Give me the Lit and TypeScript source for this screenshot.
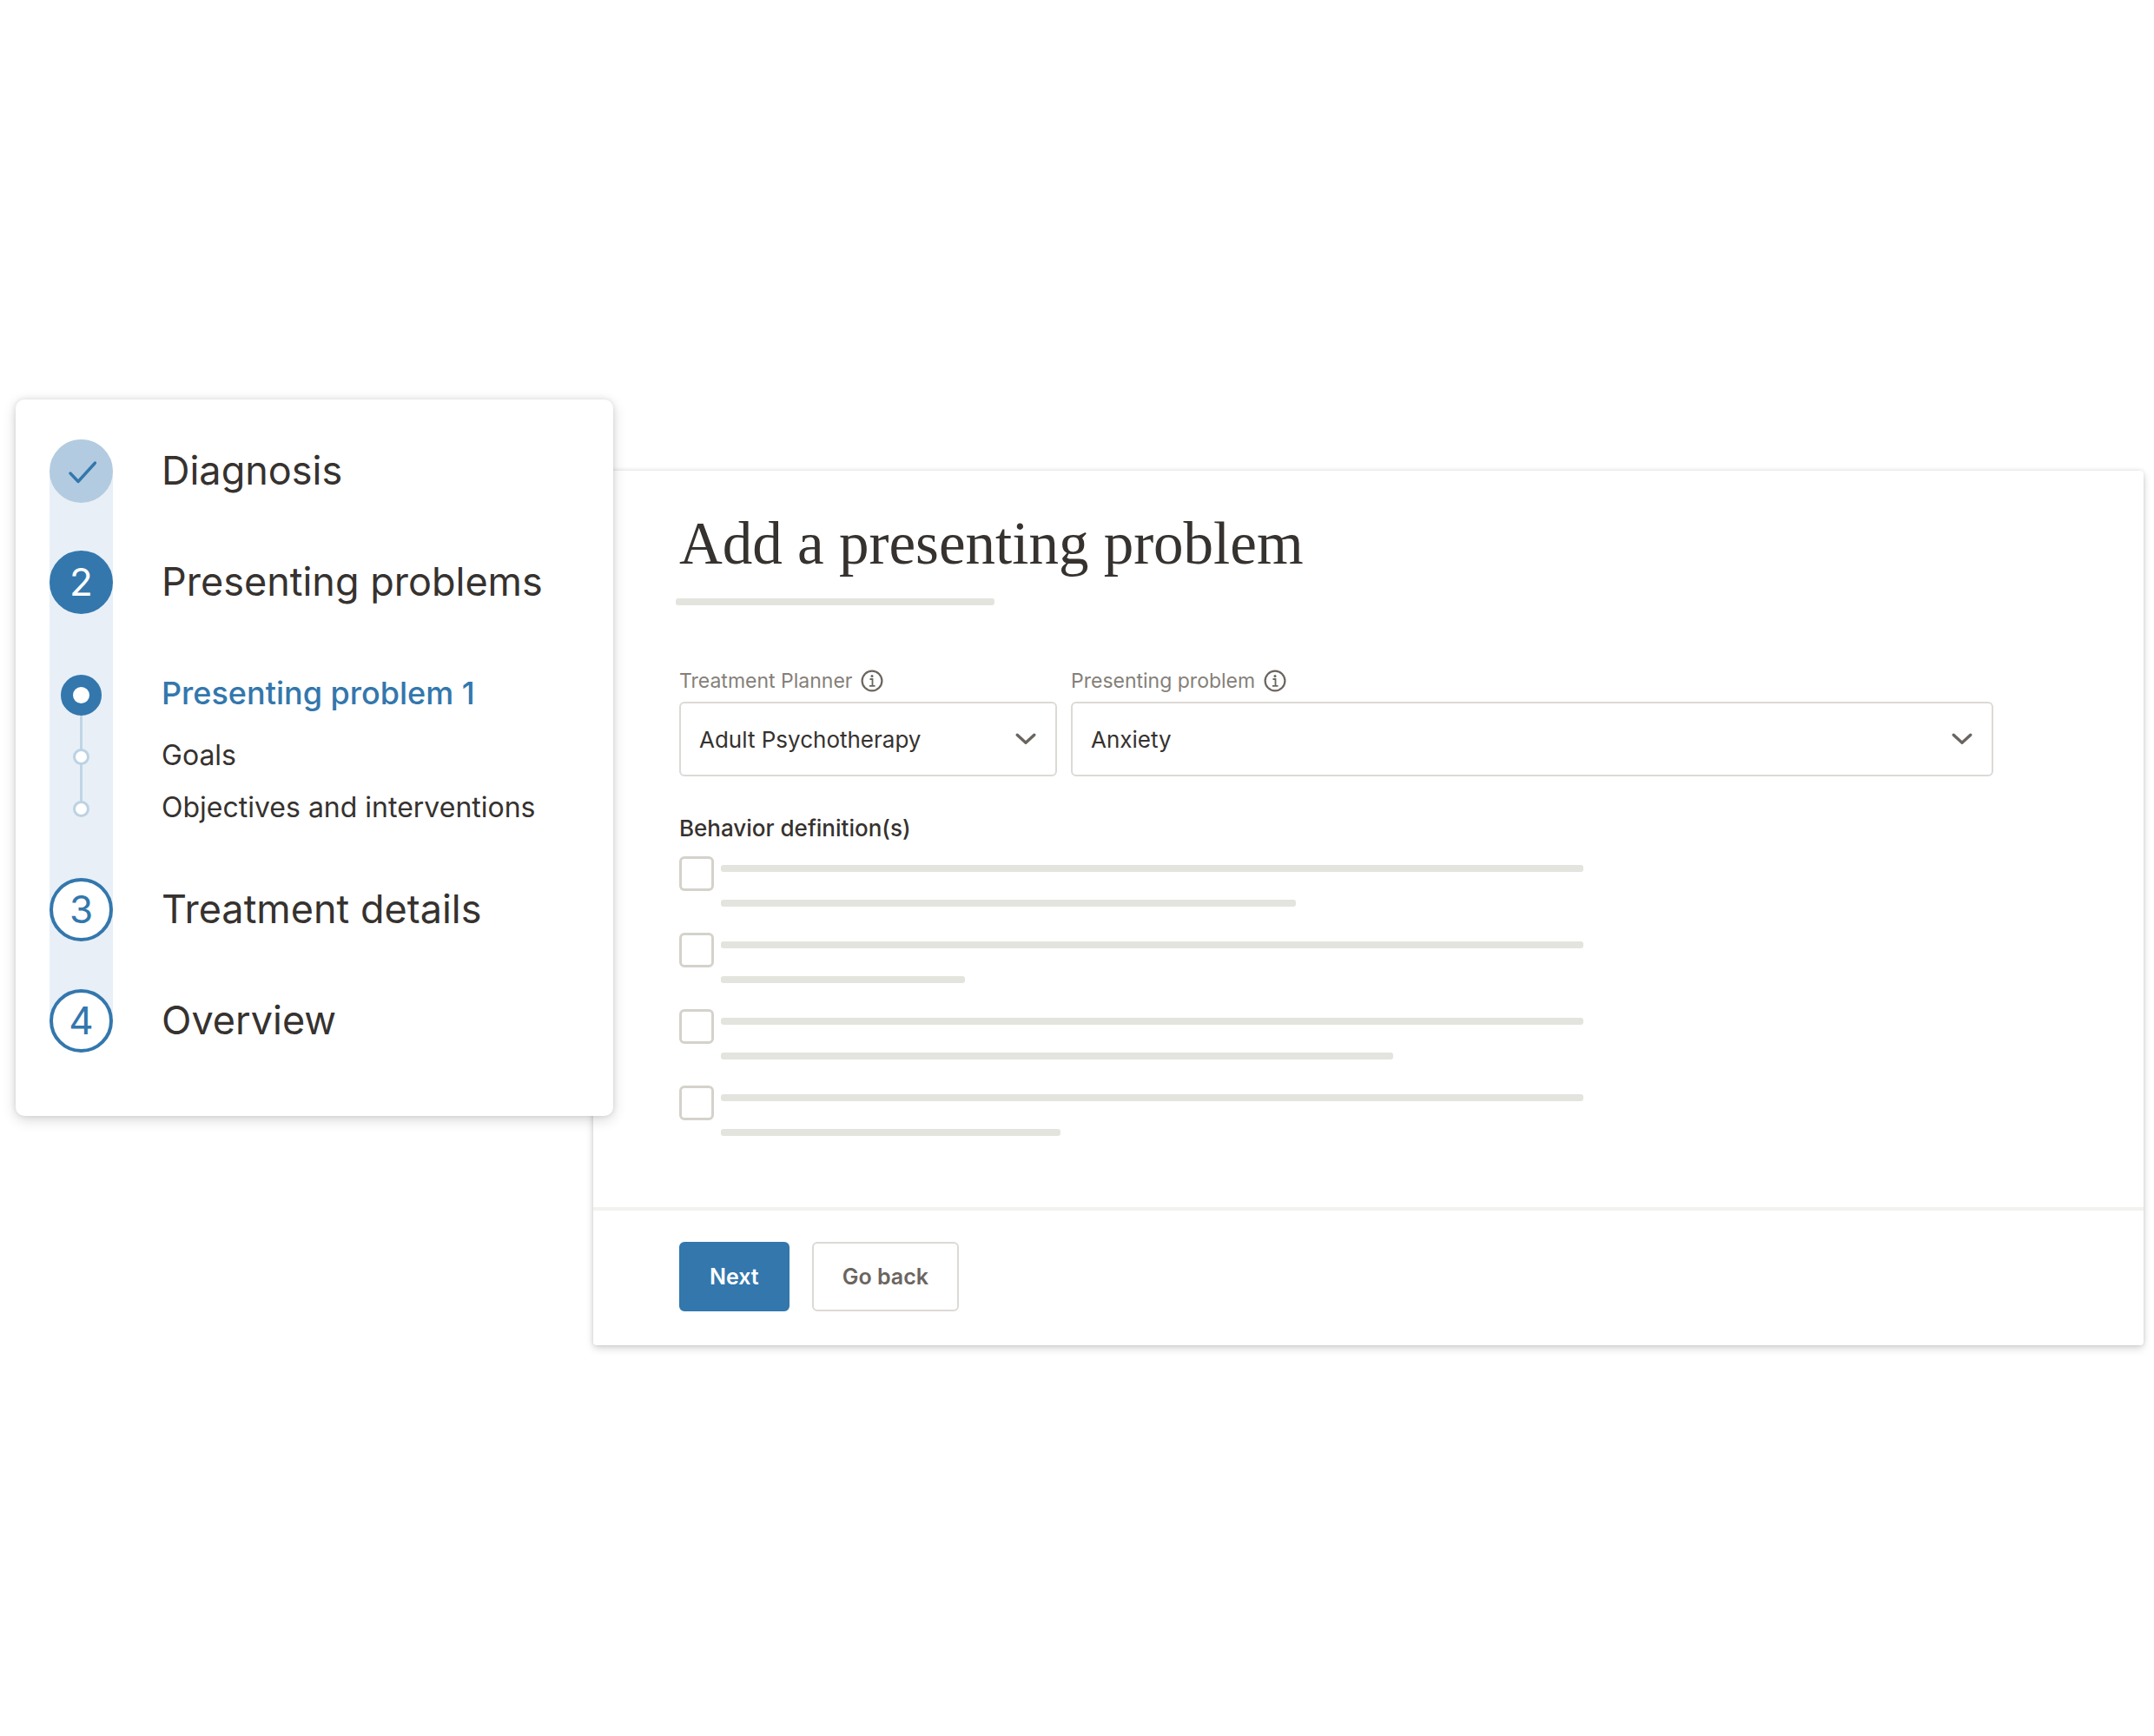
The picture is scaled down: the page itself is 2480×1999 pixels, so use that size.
import { LitElement, html, css, svg, nothing } from "lit";
import { customElement, property } from "lit/decorators.js";
import { classMap } from "lit/directives/class-map.js";

type StepState = "done" | "current" | "upcoming";

interface Step {
  label: string;
  state: StepState;
  children?: { label: string; active?: boolean }[];
}

const STEPS: Step[] = [
  { label: "Diagnosis", state: "done" },
  {
    label: "Presenting problems",
    state: "current",
    children: [
      { label: "Presenting problem 1", active: true },
      { label: "Goals" },
      { label: "Objectives and interventions" },
    ],
  },
  { label: "Treatment details", state: "upcoming" },
  { label: "Overview", state: "upcoming" },
];

/* Widths of the two placeholder lines of each definition, in px. */
const DEFINITIONS: [number, number][] = [
  [993, 662],
  [993, 281],
  [993, 774],
  [993, 391],
];

const checkIcon = svg`<svg width="34" height="28" viewBox="0 0 34 28" fill="none" aria-hidden="true">
  <path d="M4 16 L13 25.5 L32.5 4" stroke="currentColor" stroke-width="3.4" stroke-linecap="round" stroke-linejoin="round" />
</svg>`;

const infoIcon = svg`<svg width="26" height="26" viewBox="0 0 26 26" fill="none" aria-hidden="true">
  <circle cx="13" cy="13" r="11.4" stroke="currentColor" stroke-width="2.2" />
  <path d="M10.5 11 H13.5 V18.5 M10 18.8 H16.5" stroke="currentColor" stroke-width="1.8" />
  <circle cx="13" cy="7.5" r="1.5" fill="currentColor" />
</svg>`;

const chevronIcon = svg`<svg class="chevron" width="26" height="16" viewBox="0 0 26 16" fill="none" aria-hidden="true">
  <path d="M3.2 3.2 L13 12.2 L22.8 3.2" stroke="currentColor" stroke-width="3.4" stroke-linecap="round" stroke-linejoin="round" />
</svg>`;

@customElement("step-nav")
export class StepNav extends LitElement {
  static styles = css`
    :host {
      display: block;
      box-sizing: border-box;
      padding: 46px 39px 73px;
      border-radius: 10px;
      background: #fff;
      box-shadow: 0 4px 16px rgba(0, 0, 0, 0.16), 0 0 6px rgba(0, 0, 0, 0.1);
    }
    ol {
      list-style: none;
      margin: 0;
      padding: 0;
    }
    .steps {
      background: linear-gradient(#e8eff6, #e8eff6) no-repeat 0 37px / 73px calc(100% - 74px);
    }
    a {
      display: grid;
      grid-template-columns: 73px 1fr;
      column-gap: 56px;
      align-items: center;
      justify-items: start;
      color: #36322f;
      text-decoration: none;
      white-space: nowrap;
    }
    .step {
      height: 73px;
      font-size: 45px;
      line-height: 70px;
      margin-bottom: 55px;
    }
    li:last-child > .step {
      margin-bottom: 0;
    }
    .step .label {
      padding-bottom: 2px;
    }
    .marker {
      box-sizing: border-box;
      width: 73px;
      height: 73px;
      padding-bottom: 2px;
      border-radius: 50%;
      display: flex;
      align-items: center;
      justify-content: center;
      border: 4px solid #3377ad;
      background: #fff;
      color: #3377ad;
      font-size: 44px;
    }
    .done {
      padding-bottom: 0;
      border-color: #b3cbe0;
      background: #b3cbe0;
    }
    .current {
      background: #3377ad;
      color: #fff;
    }
    .substeps {
      margin-bottom: 50px;
      background: linear-gradient(#c0d5e6, #c0d5e6) no-repeat 35px 38px / 3px calc(100% - 68px);
    }
    .substep {
      height: 60px;
      font-size: 32px;
      line-height: 40px;
    }
    .substep .label {
      padding-bottom: 2px;
    }
    .active {
      height: 76px;
      margin-bottom: 3px;
      font-size: 36px;
      font-weight: 500;
      color: #3377ad;
    }
    .active .label {
      padding-bottom: 4px;
    }
    .dot {
      box-sizing: border-box;
      width: 19px;
      height: 19px;
      border-radius: 50%;
      border: 3px solid #bcd2e4;
      background: #fff;
      justify-self: center;
    }
    .active .dot {
      width: 47px;
      height: 47px;
      border: 14px solid #3377ad;
    }
  `;

  private renderStep(step: Step, index: number) {
    return html`<li>
      <a class="step" href="#step-${index + 1}">
        <span class="marker ${step.state}">${step.state === "done" ? checkIcon : index + 1}</span>
        <span class="label">${step.label}</span>
      </a>
      ${step.children
        ? html`<ol class="substeps">
            ${step.children.map(
              (child) => html`<li>
                <a class=${classMap({ substep: true, active: !!child.active })} href="#substep">
                  <span class="dot"></span><span class="label">${child.label}</span>
                </a>
              </li>`
            )}
          </ol>`
        : nothing}
    </li>`;
  }

  render() {
    return html`<nav><ol class="steps">${STEPS.map((s, i) => this.renderStep(s, i))}</ol></nav>`;
  }
}

@customElement("select-field")
export class SelectField extends LitElement {
  @property() label = "";
  @property() value = "";

  static styles = css`
    :host {
      display: block;
      min-width: 0;
    }
    .label {
      display: flex;
      align-items: center;
      gap: 10px;
      height: 26px;
      margin-bottom: 11px;
      font-size: 23px;
      color: #857f79;
      white-space: nowrap;
    }
    svg {
      color: #6b655f;
    }
    .control {
      display: grid;
      align-items: center;
    }
    select,
    .chevron {
      grid-area: 1 / 1;
    }
    select {
      appearance: none;
      width: 100%;
      height: 86px;
      margin: 0;
      padding: 0 80px 0 21px;
      border: 2px solid #dcdad5;
      border-radius: 6px;
      background: #fff;
      color: #36322f;
      font: inherit;
      font-size: 26px;
    }
    .chevron {
      justify-self: end;
      margin-right: 23px;
      pointer-events: none;
    }
  `;

  render() {
    return html`
      <label class="label" for="field">${this.label} ${infoIcon}</label>
      <div class="control">
        <select id="field"><option>${this.value}</option></select>
        ${chevronIcon}
      </div>
    `;
  }
}

@customElement("app-root")
export class AppRoot extends LitElement {
  static styles = css`
    :host {
      display: flex;
      align-items: flex-start;
      box-sizing: border-box;
      min-height: 100vh;
      padding: 460px 12px 40px 18px;
      background: #fff;
      font-family: Inter, "Liberation Sans", sans-serif;
      color: #36322f;
    }
    step-nav {
      flex: 0 0 688px;
      z-index: 1;
    }
    main {
      flex: 1;
      min-width: 0;
      margin: 82px 0 0 -23px;
      border-radius: 4px;
      background: #fff;
      box-shadow: 0 4px 10px rgba(0, 0, 0, 0.15), 0 0 5px rgba(0, 0, 0, 0.12);
    }
    .body {
      padding: 46px 173px 84px 99px;
    }
    h1 {
      margin: 0;
      font-family: "Liberation Serif", serif;
      font-size: 69px;
      line-height: 76px;
      font-weight: 400;
    }
    .line {
      display: block;
      height: 8px;
      border-radius: 3px;
      background: #e4e4de;
      max-width: 100%;
    }
    .intro {
      width: 367px;
      margin: 25px 0 0 -4px;
    }
    .fields {
      display: grid;
      grid-template-columns: 435px 1fr;
      gap: 16px;
      margin-top: 74px;
    }
    fieldset {
      margin: 44px 0 0;
      padding: 0;
      border: 0;
    }
    legend {
      padding: 0;
      font-size: 26px;
      line-height: 32px;
      font-weight: 500;
    }
    .options {
      display: grid;
      gap: 32px;
      padding-top: 16px;
    }
    .option {
      display: flex;
      gap: 8px;
      height: 56px;
    }
    .option input {
      appearance: none;
      flex: none;
      box-sizing: border-box;
      width: 40px;
      height: 40px;
      margin: 0;
      border: 3px solid #d5d2cc;
      border-radius: 6px;
      background: #fff;
    }
    .lines {
      display: grid;
      flex: 1;
      align-content: start;
      gap: 32px;
      padding-top: 10px;
    }
    footer {
      display: flex;
      gap: 26px;
      padding: 36px 99px 39px;
      border-top: 4px solid #f2f2f0;
    }
    button {
      box-sizing: border-box;
      height: 80px;
      margin: 0;
      padding: 0 33px;
      border: 2px solid #dcdad5;
      border-radius: 6px;
      background: #fff;
      color: #6b655f;
      font: inherit;
      font-size: 25px;
      font-weight: 600;
    }
    .primary {
      border-color: #3377ad;
      background: #3377ad;
      color: #fff;
    }
  `;

  render() {
    return html`
      <step-nav></step-nav>
      <main>
        <div class="body">
          <h1>Add a presenting problem</h1>
          <span class="line intro"></span>
          <div class="fields">
            <select-field label="Treatment Planner" value="Adult Psychotherapy"></select-field>
            <select-field label="Presenting problem" value="Anxiety"></select-field>
          </div>
          <fieldset>
            <legend>Behavior definition(s)</legend>
            <div class="options">
              ${DEFINITIONS.map(
                (widths, i) => html`<label class="option">
                  <input type="checkbox" aria-label="Behavior definition ${i + 1}" />
                  <span class="lines">
                    ${widths.map((w) => html`<span class="line" style="width:${w}px"></span>`)}
                  </span>
                </label>`
              )}
            </div>
          </fieldset>
        </div>
        <footer>
          <button type="button" class="primary">Next</button>
          <button type="button">Go back</button>
        </footer>
      </main>
    `;
  }
}
